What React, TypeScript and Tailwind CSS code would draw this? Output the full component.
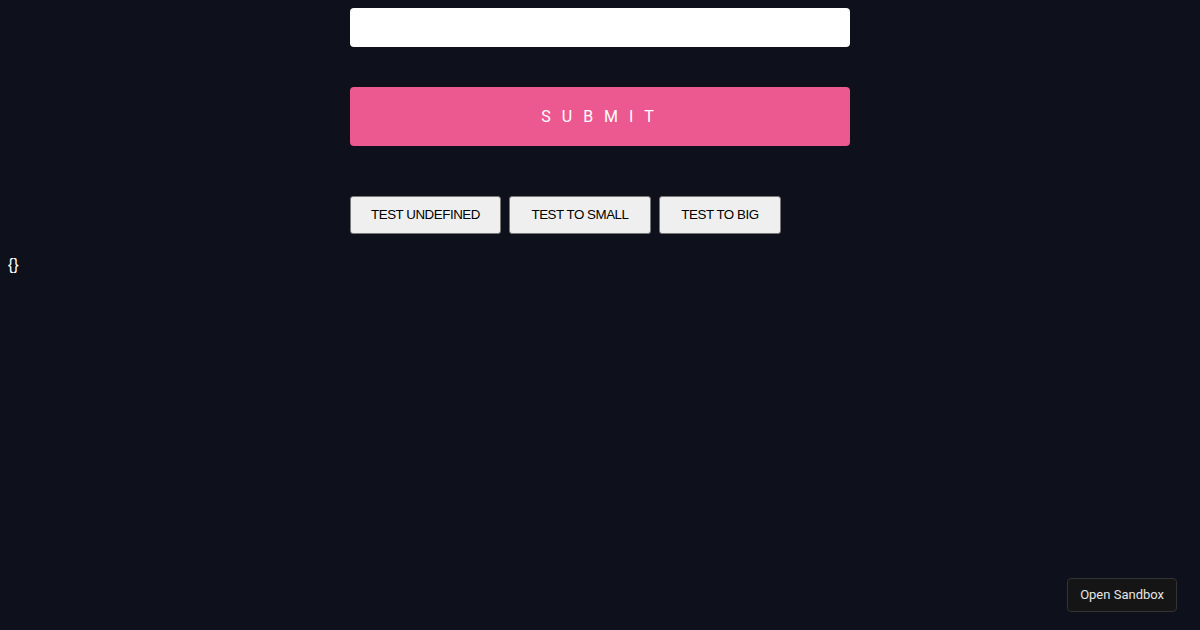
import React, { useState } from "react";

export default function App() {
  const [value, setValue] = useState("");

  return (
    <div className="min-h-[630px] bg-[#0e101b] font-['Liberation_Sans',Arial,sans-serif] text-white p-2">
      {/* FORM */}
      <div className="mx-auto w-[500px] flex flex-col">
        <input
          value={value}
          onChange={(e) => setValue(e.target.value)}
          className="h-[39px] w-full rounded bg-white px-3 text-black text-sm outline-none"
        />

        <button className="mt-10 h-[59px] w-full rounded bg-[#ec5990] text-white text-base tracking-[11px] pl-[6px] font-['Roboto',sans-serif]">
          SUBMIT
        </button>

        <div className="mt-[50px] flex gap-2">
          <button className="h-[38px] w-[151px] rounded-[3px] border border-[#767676] bg-[#efefef] text-[13.33px] tracking-[-0.45px] text-black">
            TEST UNDEFINED
          </button>
          <button className="h-[38px] w-[142px] rounded-[3px] border border-[#767676] bg-[#efefef] text-[13.33px] tracking-[-0.45px] text-black">
            TEST TO SMALL
          </button>
          <button className="h-[38px] w-[122px] rounded-[3px] border border-[#767676] bg-[#efefef] text-[13.33px] tracking-[-0.45px] text-black">
            TEST TO BIG
          </button>
        </div>
      </div>

      {/* OUTPUT */}
      <p className="mt-[22px] text-base leading-[18px]">{"{}"}</p>

      {/* SANDBOX LINK */}
      <button className="fixed bottom-[18px] right-[23px] h-[34px] px-3 rounded border border-[#333] bg-[#151515] text-[13px] text-[#e6e6e6] font-['Roboto',sans-serif]">
        Open Sandbox
      </button>
    </div>
  );
}
